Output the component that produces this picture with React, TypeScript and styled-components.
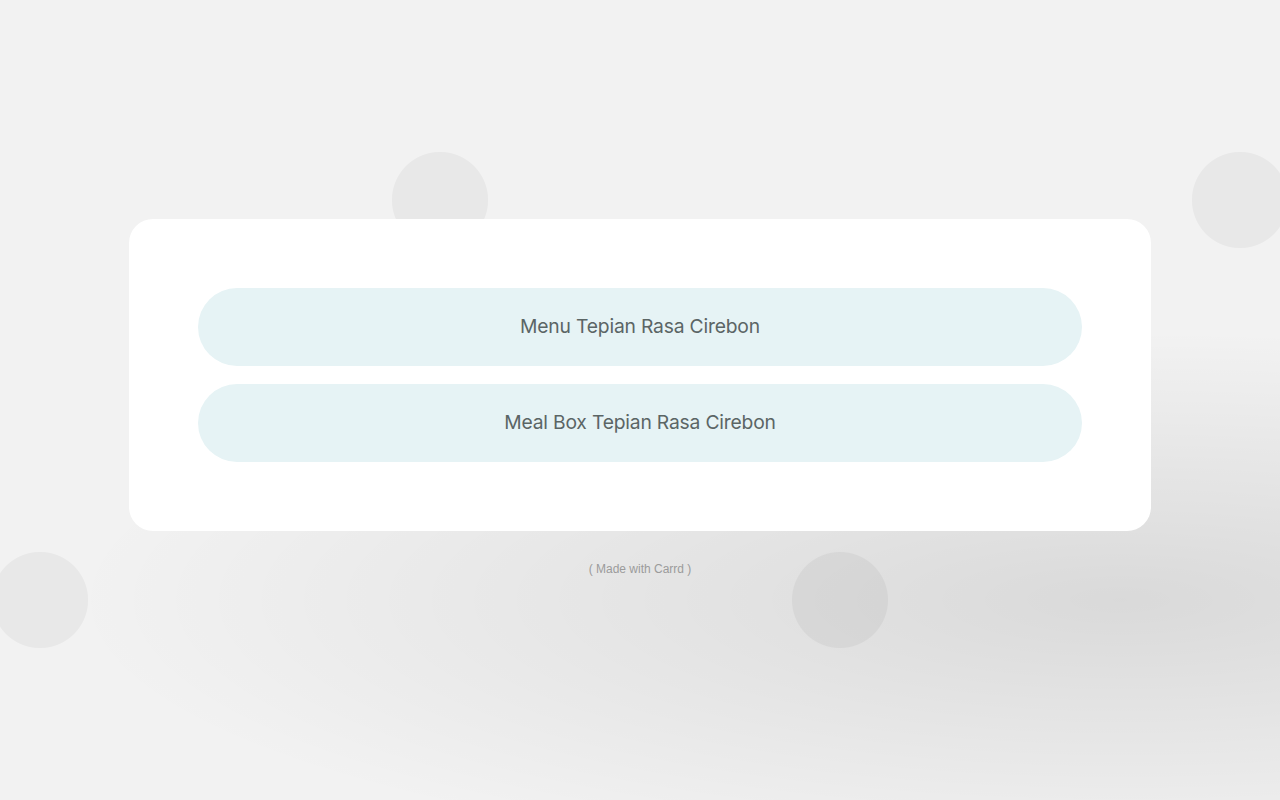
import React from 'react'
import styled, { createGlobalStyle } from 'styled-components'

// Estilos globais e fundo com padrão de círculos
const GlobalStyle = createGlobalStyle`
  html, body {
    margin: 0;
    padding: 0;
    height: 100%;
  }
  body {
    background-color: #f2f2f2;
    background-image:
      radial-gradient(circle at 640px 200px, rgba(0, 0, 0, 0.042) 47.5px, transparent 48.5px),
      radial-gradient(circle at 240px 600px, rgba(0, 0, 0, 0.042) 47.5px, transparent 48.5px),
      radial-gradient(ellipse 1050px 270px at 1120px 600px, rgba(0, 0, 0, 0.1), rgba(0, 0, 0, 0) 100%);
    background-size: 800px 800px, 800px 800px, 100% 100%;
    background-position: -200px 0, -200px 0, 0 0;
    background-repeat: repeat, repeat, no-repeat;
  }
`

const Wrapper = styled.div`
  min-height: 100vh;
  box-sizing: border-box;
  padding-bottom: 6px;
  display: flex;
  flex-direction: column;
  align-items: center;
  justify-content: center;
`

const Card = styled.div`
  width: 1022px;
  box-sizing: border-box;
  padding: 69px;
  background: #ffffff;
  border-radius: 24px;
  display: flex;
  flex-direction: column;
  gap: 18px;
`

const LinkButton = styled.a`
  display: flex;
  align-items: center;
  justify-content: center;
  box-sizing: border-box;
  height: 78px;
  padding-bottom: 2px;
  border-radius: 39px;
  background: #e6f3f5;
  color: #5b6565;
  font-family: 'Inter', 'Noto Sans', sans-serif;
  font-size: 19.3px;
  font-weight: 400;
  letter-spacing: -0.01em;
  text-decoration: none;
  cursor: pointer;
`

const Credit = styled.p`
  margin: 31px 0 0;
  font-family: 'Liberation Sans', Arial, sans-serif;
  font-size: 12px;
  line-height: 14px;
  color: #9b9b9b;
`

const links = ['Menu Tepian Rasa Cirebon', 'Meal Box Tepian Rasa Cirebon']

const App: React.FC = () => {
  return (
    <>
      <GlobalStyle />
      <Wrapper>
        <Card>
          {links.map((label) => (
            <LinkButton key={label}>{label}</LinkButton>
          ))}
        </Card>
        <Credit>( Made with Carrd )</Credit>
      </Wrapper>
    </>
  )
}

export default App
